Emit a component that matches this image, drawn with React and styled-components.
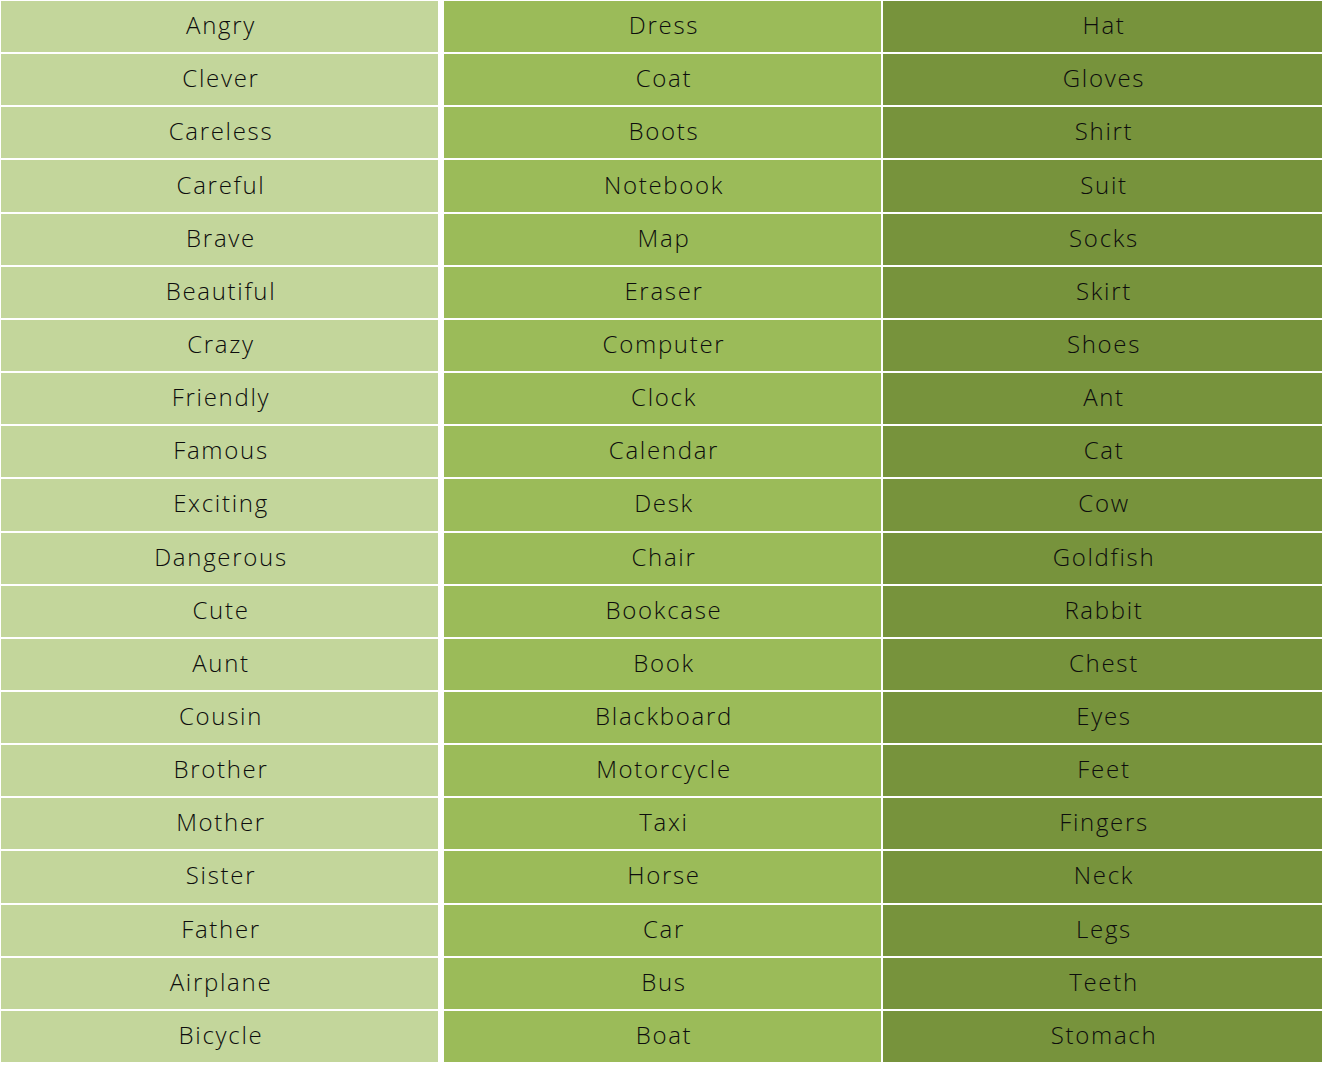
import styled, { createGlobalStyle } from "styled-components";

const GlobalStyle = createGlobalStyle`
  html, body {
    margin: 0;
    padding: 0;
    background: #ffffff;
  }
`;

const Page = styled.div`
  padding: 1px 2px 4px 1px;
`;

// 20 rows separated by thin white rules
const Table = styled.div`
  display: grid;
  grid-template-columns: 437px 443px 441px;
  grid-template-rows: repeat(20, 1fr);
  row-gap: 2px;
  height: 1061px;
`;

const Cell = styled.div`
  background: ${(p) => p.$bg};
  margin-left: ${(p) => p.$gap}px;
  display: flex;
  align-items: center;
  justify-content: center;
  font-family: "Open Sans", "Liberation Sans", sans-serif;
  font-weight: 300;
  font-size: 24px;
  letter-spacing: 1.7px;
  color: #0d0d0d;
  padding-bottom: 4px;
  padding-left: 3px;
  box-sizing: border-box;
`;

const columns = [
  {
    bg: "#c3d69b",
    gap: 0,
    words: [
      "Angry", "Clever", "Careless", "Careful", "Brave", "Beautiful", "Crazy",
      "Friendly", "Famous", "Exciting", "Dangerous", "Cute", "Aunt", "Cousin",
      "Brother", "Mother", "Sister", "Father", "Airplane", "Bicycle",
    ],
  },
  {
    bg: "#9bbb59",
    gap: 6,
    words: [
      "Dress", "Coat", "Boots", "Notebook", "Map", "Eraser", "Computer",
      "Clock", "Calendar", "Desk", "Chair", "Bookcase", "Book", "Blackboard",
      "Motorcycle", "Taxi", "Horse", "Car", "Bus", "Boat",
    ],
  },
  {
    bg: "#77933c",
    gap: 2,
    words: [
      "Hat", "Gloves", "Shirt", "Suit", "Socks", "Skirt", "Shoes", "Ant",
      "Cat", "Cow", "Goldfish", "Rabbit", "Chest", "Eyes", "Feet", "Fingers",
      "Neck", "Legs", "Teeth", "Stomach",
    ],
  },
];

const App = () => {
  const rows = columns[0].words.map((_, i) => i);
  return (
    <>
      <GlobalStyle />
      <Page>
        <Table>
          {rows.map((i) =>
            columns.map((col, c) => (
              <Cell key={`${i}-${c}`} $bg={col.bg} $gap={col.gap}>
                {col.words[i]}
              </Cell>
            ))
          )}
        </Table>
      </Page>
    </>
  );
};

export default App;
